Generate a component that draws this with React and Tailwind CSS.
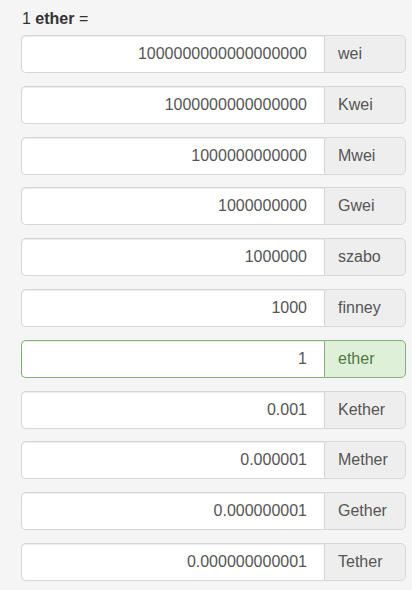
const units = [
  ["1000000000000000000", "wei"],
  ["1000000000000000", "Kwei"],
  ["1000000000000", "Mwei"],
  ["1000000000", "Gwei"],
  ["1000000", "szabo"],
  ["1000", "finney"],
  ["1", "ether"],
  ["0.001", "Kether"],
  ["0.000001", "Mether"],
  ["0.000000001", "Gether"],
  ["0.000000000001", "Tether"],
];

function UnitRow({ value, unit }) {
  const active = unit === "ether";
  return (
    <div className="flex h-[38px]">
      <div
        className={`flex-1 flex items-center justify-end pr-[17px] bg-white rounded-l-[5px] border border-r-0 shadow-[inset_0_1px_1px_rgba(0,0,0,0.075)] text-[#555] ${
          active ? "border-[#86ae78]" : "border-[#d6d6d6]"
        }`}
      >
        {value}
      </div>
      <div
        className={`w-[82px] flex items-center pl-[13px] rounded-r-[5px] border ${
          active
            ? "bg-[#dff0d8] border-[#86ae78] text-[#4d7a43]"
            : "bg-[#eeeeee] border-[#d6d6d6] text-[#555]"
        }`}
      >
        {unit}
      </div>
    </div>
  );
}

export default function App() {
  return (
    <div className="min-h-[590px] bg-[#f5f5f5] pl-[21px] pr-[6px] pt-[9px] text-[16px] font-['Liberation_Sans',Arial,sans-serif]">
      <div className="leading-[20px] mb-[6px] text-[#333] pl-px">
        1 <span className="font-bold">ether</span> =
      </div>
      <div className="flex flex-col gap-[12.8px]">
        {units.map(([v, u]) => (
          <UnitRow key={u} value={v} unit={u} />
        ))}
      </div>
    </div>
  );
}
